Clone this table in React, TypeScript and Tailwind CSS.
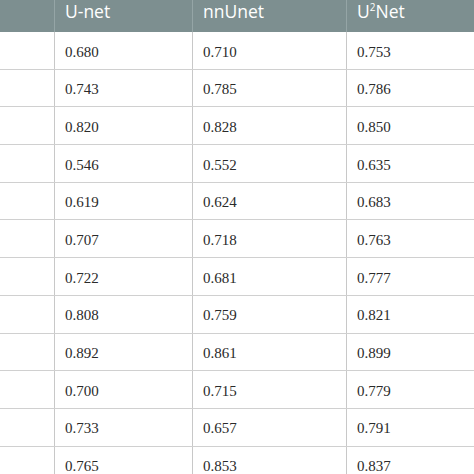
const rows = [
  ["0.680", "0.710", "0.753"],
  ["0.743", "0.785", "0.786"],
  ["0.820", "0.828", "0.850"],
  ["0.546", "0.552", "0.635"],
  ["0.619", "0.624", "0.683"],
  ["0.707", "0.718", "0.763"],
  ["0.722", "0.681", "0.777"],
  ["0.808", "0.759", "0.821"],
  ["0.892", "0.861", "0.899"],
  ["0.700", "0.715", "0.779"],
  ["0.733", "0.657", "0.791"],
  ["0.765", "0.853", "0.837"],
];

const cols = "grid grid-cols-[55px_138px_154px_1fr]";

export default function App() {
  return (
    <div className="w-[474px] h-[474px] overflow-hidden bg-white">
      <div className={`${cols} h-[32px] bg-[#7d8f90] text-white text-[17.5px] font-['Open_Sans',sans-serif]`}>
        <div className="border-r border-[#95a5a6]" />
        <div className="border-r border-[#95a5a6] pl-[10px] leading-[20px] pt-[1px]">U-net</div>
        <div className="border-r border-[#95a5a6] pl-[10px] leading-[20px] pt-[1px]">nnUnet</div>
        <div className="pl-[10px] leading-[20px] pt-[1px]">
          U<sup className="text-[10px] top-[-7px]">2</sup>Net
        </div>
      </div>
      {rows.map((r, i) => (
        <div
          key={i}
          className={`${cols} h-[37.7px] border-b border-[#d0d0d0] text-[15px] text-[#2a2a2a] font-['Liberation_Serif',serif]`}
        >
          <div className="border-r border-[#c8c8c8]" />
          {r.map((v, j) => (
            <div
              key={j}
              className={`flex items-center pl-[10px] pt-[3px] ${j < 2 ? "border-r border-[#c8c8c8]" : ""}`}
            >
              {v}
            </div>
          ))}
        </div>
      ))}
    </div>
  );
}
